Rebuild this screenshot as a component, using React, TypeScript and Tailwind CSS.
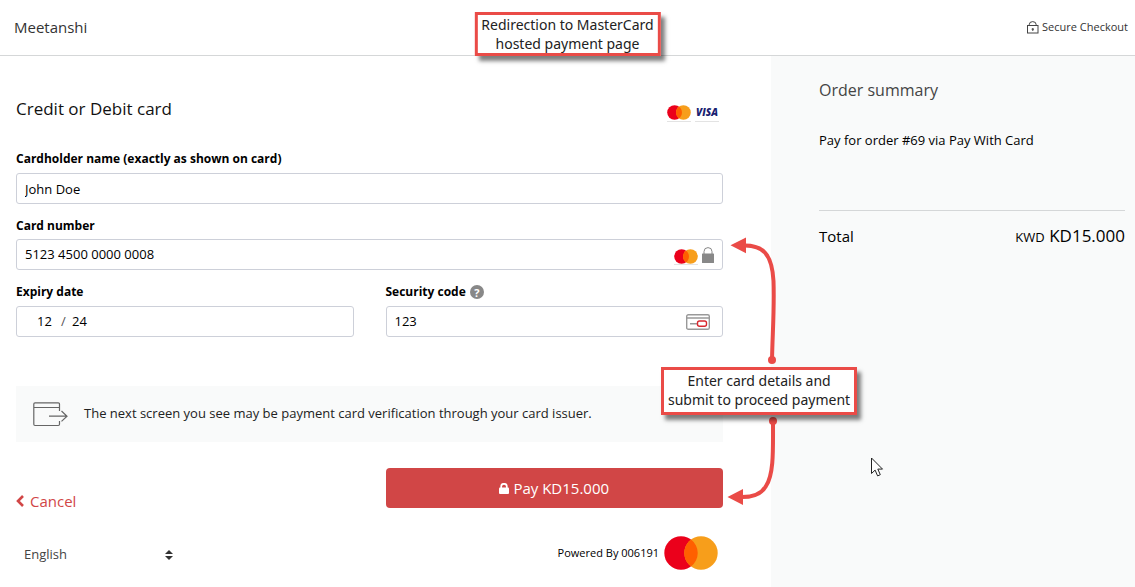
import type { ReactNode } from "react";

function MastercardMark({ className }: { className: string }) {
  return (
    <svg viewBox="0 0 54 34" className={className} aria-hidden="true">
      <circle cx="17" cy="17" r="16.7" fill="#eb001b" />
      <circle cx="37" cy="17" r="16.7" fill="#f79e1b" />
      <path d="M27 3.6a16.7 16.7 0 0 1 0 26.8a16.7 16.7 0 0 1 0-26.8z" fill="#ff5f00" />
    </svg>
  );
}

function OutlineLock() {
  return (
    <svg viewBox="0 0 12 13" className="h-[13px] w-3" fill="none" stroke="#444" aria-hidden="true">
      <rect x="0.5" y="4.5" width="10.5" height="7.5" />
      <path d="M2.2 4.5V3.8a3.5 3.2 0 0 1 7 0v0.7M5.8 7v3M4.6 8.2h2.4" />
    </svg>
  );
}

function GreyLock() {
  return (
    <svg viewBox="0 0 12 16" className="h-4 w-3" aria-hidden="true">
      <rect y="6.5" width="12" height="9.5" rx="0.6" fill="#888" />
      <path d="M2 7V4.6a4 4 0 0 1 8 0V7" fill="none" stroke="#888" />
    </svg>
  );
}

function CodeCard() {
  return (
    <svg viewBox="0 0 24 16" className="h-4 w-6" fill="none" aria-hidden="true">
      <rect x="0.7" y="0.7" width="22.6" height="14.6" rx="1.6" stroke="#999" strokeWidth="1.4" />
      <path d="M0.7 4h22.6M4 9.7h7" stroke="#999" strokeWidth="1.4" />
      <rect x="11.5" y="7" width="9" height="5.2" rx="2" stroke="#d8282f" strokeWidth="1.4" />
    </svg>
  );
}

function NextScreen() {
  return (
    <svg viewBox="0 0 35 25" className="h-[25px] w-[35px] shrink-0" fill="none" stroke="#666" strokeWidth="1.2" aria-hidden="true">
      <path d="M26.5 9V2a1.2 1.2 0 0 0-1.2-1.2H2A1.2 1.2 0 0 0 .8 2v20.300A1.2 1.2 0 0 0 2 23.500h23.300a1.2 1.2 0 0 0 1.2-1.2V19M.8 5.500h25.700M16 14.200h18M28.500 9l5.500 5.200-5.500 5.200" />
    </svg>
  );
}

function SolidLock() {
  return (
    <svg viewBox="0 0 10 11" className="h-[11px] w-[10px]" aria-hidden="true">
      <rect y="4.6" width="10" height="6.4" rx="1" fill="#fff" />
      <path d="M2.2 5.200V3.500a2.800 2.700 0 0 1 5.600 0v1.700" fill="none" stroke="#fff" strokeWidth="1.7" />
    </svg>
  );
}

function Callout({ children, className }: { children: ReactNode; className: string }) {
  return (
    <div
      className={`absolute border-[3px] border-[#ea4b47] bg-white text-center font-['Noto_Sans',sans-serif] text-sm leading-[19px] whitespace-nowrap text-[#222] shadow-[4px_5px_4px_rgba(0,0,0,0.5)] ${className}`}
    >
      {children}
    </div>
  );
}

function Arrows() {
  return (
    <svg viewBox="0 0 54 274" className="absolute top-[180px] left-full ml-1 h-[274px] w-[54px]" aria-hidden="true">
      <g fill="none" stroke="#ea4b47" strokeWidth="4">
        <path d="M18 9.500C35 9.500 45 17 46.500 45C47.500 72 45.500 98 45 124" />
        <path d="M46 185C46 214 47 238 39 250C34 259 24 261 15 261" />
      </g>
      <g fill="#ea4b47">
        <path d="M3.500 9.300L19 1.500V17.200zM.500 261L16 253V269z" />
        <circle cx="45" cy="124" r="4" />
        <circle cx="46" cy="185" r="4" />
      </g>
    </svg>
  );
}

const box = "h-[31px] w-full rounded-[3px] border border-[#cdd0d9] bg-white";
const label = "flex h-5 items-center gap-1 text-xs leading-5 font-bold";

export default function App() {
  return (
    <div className="relative flex min-h-screen flex-col bg-white font-['Open_Sans',sans-serif] text-[13px] text-black">
      <header className="flex h-14 items-center justify-between border-b border-[#d5d7d8] pr-[7px] pl-[14px]">
        <span className="text-[15px] text-[#333]">Meetanshi</span>
        <span className="flex items-center gap-[3px] text-[11px] text-[#333]">
          <OutlineLock />
          Secure Checkout
        </span>
      </header>
      <Callout className="top-3 left-1/2 -translate-x-1/2 px-1">
        Redirection to MasterCard
        <br />
        hosted payment page
      </Callout>

      <div className="grid grow grid-cols-[minmax(0,1fr)_364px]">
        <main className="pr-12 pl-4">
          <form className="relative pt-[41px]">
            <div className="flex h-6 items-center justify-between">
              <h1 className="text-[17px] leading-6 text-[#111]">Credit or Debit card</h1>
              <div className="flex items-center gap-1 pt-2 pr-1">
                <span className="border-b border-[#e3e3e3] pb-px">
                  <MastercardMark className="h-[15px] w-6" />
                </span>
                <span className="flex h-[17px] w-6 items-center justify-center border-b border-[#e3e3e3] text-[10px] font-extrabold text-[#1a1f71] italic">
                  VISA
                </span>
              </div>
            </div>

            <label htmlFor="name" className={`${label} mt-7`}>
              Cardholder name (exactly as shown on card)
            </label>
            <input id="name" defaultValue="John Doe" className={`${box} mt-1 block px-2`} />

            <label htmlFor="number" className={`${label} mt-3`}>
              Card number
            </label>
            <div className={`${box} mt-[3px] flex items-center pr-2`}>
              <input id="number" defaultValue="5123 4500 0000 0008" className="min-w-0 grow px-2 outline-none" />
              <span className="mt-[5px] mr-1 border-b border-[#e3e3e3]">
                <MastercardMark className="h-[15px] w-6" />
              </span>
              <GreyLock />
            </div>

            <div className="mt-3 grid grid-cols-2 gap-8">
              <div>
                <label htmlFor="month" className={label}>
                  Expiry date
                </label>
                <div className={`${box} mt-1 flex items-center pl-5`}>
                  <input id="month" defaultValue="12" className="w-6 outline-none" />
                  <span className="w-[11px] text-[#555]">/</span>
                  <input aria-label="Expiry year" defaultValue="24" className="w-8 outline-none" />
                </div>
              </div>
              <div>
                <label htmlFor="code" className={label}>
                  Security code
                  <span className="flex size-[14px] items-center justify-center rounded-full bg-[#888] text-[11px] leading-none text-white">
                    ?
                  </span>
                </label>
                <div className={`${box} mt-1 flex items-center pr-3`}>
                  <input id="code" defaultValue="123" className="min-w-0 grow px-2 outline-none" />
                  <CodeCard />
                </div>
              </div>
            </div>

            <div className="mt-[49px] flex h-14 items-center gap-4 bg-[#f9fafa] pl-[17px] text-[#222]">
              <NextScreen />
              <p>The next screen you see may be payment card verification through your card issuer.</p>
            </div>

            <div className="mt-[26px] grid h-[45px] grid-cols-2 gap-8">
              <a href="#cancel" className="flex items-center gap-[6px] self-end text-[15px] leading-6 text-[#d14646]">
                <svg viewBox="0 0 8 12" className="h-3 w-2" fill="none" stroke="#d14646" strokeWidth="2.6" aria-hidden="true">
                  <path d="M7 1L2 6l5 5" />
                </svg>
                Cancel
              </a>
              <button
                type="button"
                className="flex h-10 items-center justify-center gap-1 rounded-[4px] bg-[#d14646] text-[15px] text-white"
              >
                <SolidLock />
                Pay KD15.000
              </button>
            </div>

            <Arrows />
            <Callout className="top-[311px] left-full -ml-[62px] px-1 pt-px pb-[3px]">
              Enter card details and
              <br />
              submit to proceed payment
            </Callout>
          </form>

          <footer className="flex items-center justify-between pt-[23px] pr-[5px] pl-2">
            <div className="relative flex items-center pt-1">
              <select aria-label="Language" className="w-[150px] appearance-none bg-transparent text-[#444]">
                <option>English</option>
              </select>
              <svg viewBox="0 0 8 10" className="pointer-events-none absolute right-px h-[10px] w-2" fill="#333" aria-hidden="true">
                <path d="M0 4L4 0l4 4zM0 6h8l-4 4z" />
              </svg>
            </div>
            <div className="flex items-center gap-[5px] text-[11px]">
              Powered By 006191
              <MastercardMark className="h-[34px] w-[54px]" />
            </div>
          </footer>
        </main>

        <aside className="bg-[#f9fafa] pt-[22px] pr-[10px] pl-12">
          <h2 className="text-base leading-6 text-[#444]">Order summary</h2>
          <p className="mt-7 leading-5">Pay for order #69 via Pay With Card</p>
          <div className="mt-[60px] flex items-baseline justify-between border-t border-[#d5d7d8] pt-[13px]">
            <span className="text-[15px]">Total</span>
            <span className="text-[17px] leading-6">
              <span className="text-[13px]">KWD</span> KD15.000
            </span>
          </div>
        </aside>
      </div>

      <svg viewBox="0 0 14 21" className="pointer-events-none absolute top-[457px] left-[870px] h-[21px] w-[14px]" aria-hidden="true">
        <path d="M1.5 1v15.500l3.600-3.400 2.500 5.800 2.700-1.200-2.500-5.600h4.700z" fill="#fff" stroke="#222" />
      </svg>
    </div>
  );
}
